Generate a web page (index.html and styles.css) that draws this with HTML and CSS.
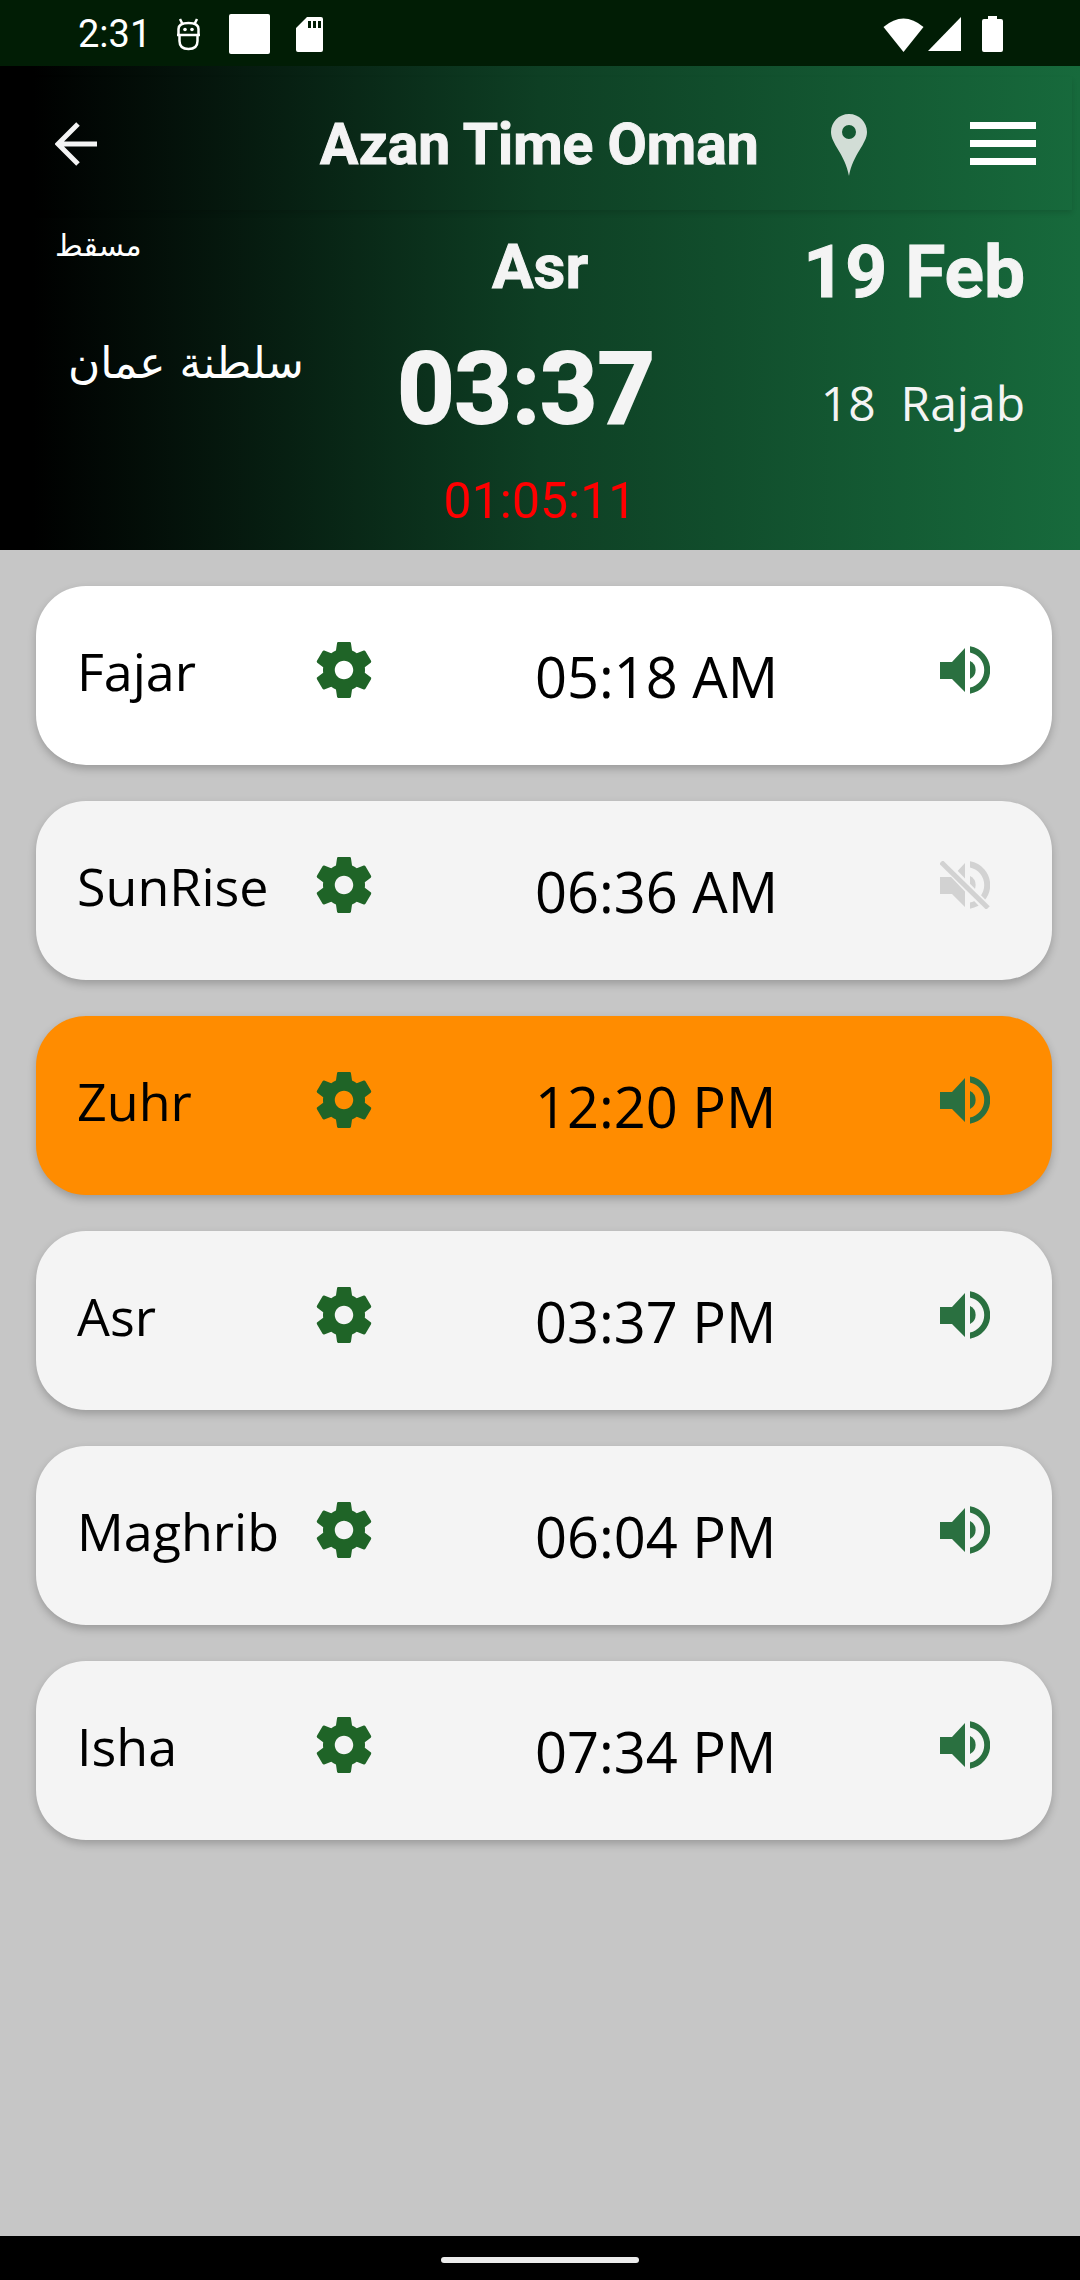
FILE: index.html
```html
<!DOCTYPE html>
<html lang="en">
<head>
  <meta charset="UTF-8">
  <title>Azan Time Oman</title>
  <link rel="stylesheet" href="styles.css">
</head>
<body>

  <!-- shared icons -->
  <svg class="defs" width="0" height="0">
    <symbol id="gear" viewBox="2 2 20 20">
      <path fill-rule="evenodd" d="M19.43 12.98c.04-.32.07-.64.07-.98s-.03-.66-.07-.98l2.11-1.65c.19-.15.24-.42.12-.64l-2-3.46c-.12-.22-.39-.3-.61-.22l-2.49 1c-.52-.4-1.08-.73-1.69-.98l-.38-2.65C14.46 2.18 14.25 2 14 2h-4c-.25 0-.46.18-.49.42l-.38 2.65c-.61.25-1.17.59-1.69.98l-2.49-1c-.23-.09-.49 0-.61.22l-2 3.46c-.13.22-.07.49.12.64l2.11 1.65c-.04.32-.07.65-.07.98s.03.66.07.98l-2.11 1.65c-.19.15-.24.42-.12.64l2 3.46c.12.22.39.3.61.22l2.49-1c.52.4 1.08.73 1.69.98l.38 2.65c.03.24.24.42.49.42h4c.25 0 .46-.18.49-.42l.38-2.65c.61-.25 1.17-.59 1.69-.98l2.49 1c.23.09.49 0 .61-.22l2-3.46c.12-.22.07-.49-.12-.64l-2.11-1.65zM12 15.3c-1.82 0-3.3-1.48-3.3-3.3s1.48-3.3 3.3-3.3 3.3 1.48 3.3 3.3-1.48 3.3-3.3 3.3z"/>
    </symbol>
    <symbol id="speaker" viewBox="0 0 50 48">
      <path d="M0 16h12L25 2v44L12 33H0z"/>
      <path d="M30 0.3A24 24 0 0 1 30 47.7V41.6A18 18 0 0 0 30 6.4z"/>
      <path d="M30 15A10 10 0 0 1 30 33z"/>
    </symbol>
  </svg>

  <div class="status-bar">
    <span class="clock">2:31</span>
    <svg class="ic-bot" viewBox="0 0 25 34" width="25" height="34">
      <path d="M4 2l2 4M21 2l-2 4M1 18h23M2.500 18V12q0-6 10-6t10 6v6M3.500 18v6q0 8 9 8t9-8v-6" fill="none" stroke="#fff" stroke-width="2.500"/>
      <circle cx="9" cy="12.500" r="1.800" fill="#fff"/>
      <circle cx="16" cy="12.500" r="1.800" fill="#fff"/>
    </svg>
    <span class="ic-square"></span>
    <svg viewBox="0 0 27 35" width="27" height="35">
      <path fill-rule="evenodd" fill="#fff" d="M11 0h14q2 0 2 2v31q0 2-2 2H2q-2 0-2-2V11zM12 4v7h3V4zM17 4v7h3V4zM22 4v7h3V4z"/>
    </svg>
    <span class="status-right">
      <svg viewBox="0 0 40 35" width="41" height="35"><path fill="#fff" d="M0 10Q20-7 40 10L20 35z"/></svg>
      <svg viewBox="0 0 33 34" width="33" height="34"><path fill="#fff" d="M33 0v34H0z"/></svg>
      <svg class="ic-battery" viewBox="0 0 21 36" width="21" height="36"><path fill="#fff" d="M6 0h9v3h4q2 0 2 2v29q0 2-2 2H2q-2 0-2-2V5q0-2 2-2h4z"/></svg>
    </span>
  </div>

  <header class="header">
    <div class="app-bar">
      <svg class="back" viewBox="0 0 42 44" width="42" height="44">
        <path d="M42 22H4M23 2L3 22l20 20" fill="none" stroke="#f4f4f4" stroke-width="5"/>
      </svg>
      <h1 class="title">Azan Time Oman</h1>
      <svg class="pin" viewBox="0 0 36 62" width="36" height="62">
        <path fill-rule="evenodd" fill="#d2ddd6" d="M18 0c10 0 18 8 18 18 0 12-14 22-18 44C14 40 0 30 0 18 0 8 8 0 18 0zM18 11a7 7 0 1 0 0 14 7 7 0 0 0 0-14z"/>
      </svg>
      <div class="menu"><span></span><span></span><span></span></div>
    </div>

    <div class="info">
      <div class="info-left">
        <p class="city" lang="ar">مسقط</p>
        <p class="country" lang="ar">سلطنة عمان</p>
      </div>
      <div class="info-mid">
        <p class="next-name">Asr</p>
        <p class="next-time">03:37</p>
        <p class="countdown">01:05:11</p>
      </div>
      <div class="info-right">
        <p class="date">19 Feb</p>
        <p class="hijri">18  Rajab</p>
      </div>
    </div>
  </header>

  <main class="list">
    <div class="row row-first">
      <span class="name">Fajar</span>
      <svg class="gear"><use href="#gear"/></svg>
      <span class="time">05:18 AM</span>
      <svg class="speaker"><use href="#speaker"/></svg>
    </div>
    <div class="row">
      <span class="name">SunRise</span>
      <svg class="gear"><use href="#gear"/></svg>
      <span class="time">06:36 AM</span>
      <svg class="speaker muted" viewBox="0 0 50 48">
        <use href="#speaker" width="50" height="48"/>
        <path class="slash-gap" d="M0 -2L50 50"/>
        <path class="slash" d="M1 1L48 47"/>
      </svg>
    </div>
    <div class="row row-active">
      <span class="name">Zuhr</span>
      <svg class="gear"><use href="#gear"/></svg>
      <span class="time">12:20 PM</span>
      <svg class="speaker"><use href="#speaker"/></svg>
    </div>
    <div class="row">
      <span class="name">Asr</span>
      <svg class="gear"><use href="#gear"/></svg>
      <span class="time">03:37 PM</span>
      <svg class="speaker"><use href="#speaker"/></svg>
    </div>
    <div class="row">
      <span class="name">Maghrib</span>
      <svg class="gear"><use href="#gear"/></svg>
      <span class="time">06:04 PM</span>
      <svg class="speaker"><use href="#speaker"/></svg>
    </div>
    <div class="row">
      <span class="name">Isha</span>
      <svg class="gear"><use href="#gear"/></svg>
      <span class="time">07:34 PM</span>
      <svg class="speaker"><use href="#speaker"/></svg>
    </div>
  </main>

  <div class="nav-bar"><span class="handle"></span></div>

</body>
</html>
```

FILE: styles.css
```css
* {
  box-sizing: border-box;
}

html, body {
  margin: 0;
  padding: 0;
}

body {
  width: 1080px;
  height: 2280px;
  display: flex;
  flex-direction: column;
  background: #c6c6c6;
  font-family: "Open Sans", sans-serif;
  overflow: hidden;
}

p, h1 {
  margin: 0;
}

.defs {
  position: absolute;
}

/* status bar */
.status-bar {
  height: 66px;
  flex: none;
  display: flex;
  align-items: center;
  padding: 2px 77px 0 78px;
  background: #011d05;
  color: #fff;
}

.clock {
  font-family: Roboto, sans-serif;
  font-size: 38px;
  width: 98px;
}

.ic-square {
  width: 41px;
  height: 40px;
  margin: 0 26px 0 28px;
  background: #fff;
  border-radius: 2px;
}

.status-right {
  margin-left: auto;
  display: flex;
  align-items: center;
  gap: 4px;
}

.ic-battery {
  margin-left: 17px;
}

/* green header */
.header {
  height: 484px;
  flex: none;
  padding-top: 11px;
  background: linear-gradient(90deg, #000 3%, #0e3f24 50%, #176a3c 100%);
  color: #f4f4f4;
  font-family: Roboto, sans-serif;
}

.app-bar {
  height: 133px;
  width: 1072px;
  display: flex;
  align-items: center;
  padding: 0 36px 0 55px;
  box-shadow: 0 3px 5px rgba(0, 0, 0, 0.12);
}

.back {
  flex: none;
}

.title {
  width: 511px;
  margin: 2px 0 0 223px;
  font-size: 57px;
  font-weight: 700;
  white-space: nowrap;
  -webkit-text-stroke: 1px #f4f4f4;
}

.pin {
  flex: none;
  margin-top: 2px;
}

.menu {
  margin-left: auto;
  width: 66px;
  display: flex;
  flex-direction: column;
  gap: 11px;
}

.menu span {
  height: 7px;
  background: #fff;
}

.info {
  display: grid;
  grid-template-columns: 340px 400px 1fr;
  padding-right: 55px;
}

.info-left {
  display: flex;
  flex-direction: column;
  align-items: flex-start;
  font-family: "DejaVu Sans", sans-serif;
  color: #fff;
}

.city {
  margin: 18px 0 0 55px;
  font-size: 30px;
}

.country {
  margin: 74px 0 0 68px;
  font-size: 44px;
}

.info-mid {
  text-align: center;
}

.next-name {
  margin-top: 20px;
  font-size: 62px;
  font-weight: 700;
  -webkit-text-stroke: 1px #f4f4f4;
}

.next-time {
  margin: 27px 28px 0 0;
  font-size: 100px;
  font-weight: 700;
  line-height: 118px;
  -webkit-text-stroke: 2px #f4f4f4;
}

.countdown {
  margin-top: 24px;
  font-size: 50px;
  color: #f00;
}

.info-right {
  text-align: right;
}

.date {
  margin-top: 19px;
  font-size: 73px;
  font-weight: 700;
  -webkit-text-stroke: 1px #f4f4f4;
}

.hijri {
  margin-top: 55px;
  font-family: "Open Sans", sans-serif;
  font-size: 48px;
  white-space: pre;
}

/* prayer rows */
.list {
  flex: 1;
  display: flex;
  flex-direction: column;
  gap: 36px;
  padding: 36px 28px 0 36px;
}

.row {
  height: 179px;
  flex: none;
  display: grid;
  grid-template-columns: 239px 56px 568px 50px;
  align-items: center;
  padding-left: 41px;
  background: #f4f4f4;
  border-radius: 50px;
  box-shadow: 0 4px 8px rgba(0, 0, 0, 0.22);
  color: #000;
}

.row-first {
  background: #fff;
}

.row-active {
  background: #ff8c00;
}

.name {
  font-size: 52px;
  margin-top: -10px;
  white-space: nowrap;
}

.time {
  padding-left: 163px;
  font-size: 56px;
  margin-top: 0;
}

.gear {
  width: 56px;
  height: 56px;
  margin-top: -12px;
  fill: #1f6427;
}

.speaker {
  width: 50px;
  height: 48px;
  margin-top: -12px;
  fill: #2a7040;
}

.speaker.muted {
  fill: #d2d2d2;
}

.slash-gap {
  stroke: #f4f4f4;
  stroke-width: 9;
}

.slash {
  stroke: #d2d2d2;
  stroke-width: 5;
}

/* gesture bar */
.nav-bar {
  height: 44px;
  flex: none;
  display: flex;
  justify-content: center;
  padding-top: 21px;
  background: #000;
}

.handle {
  width: 198px;
  height: 6px;
  border-radius: 3px;
  background: #ececec;
}
```
